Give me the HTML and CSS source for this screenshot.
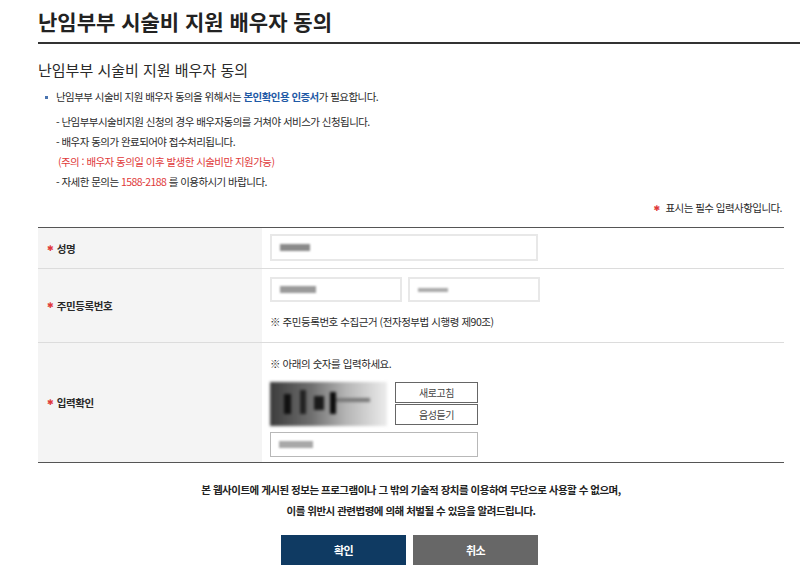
FILE: index.html
```html
<!DOCTYPE html>
<html lang="ko">
<head>
<meta charset="utf-8">
<title>난임부부 시술비 지원 배우자 동의</title>
<link rel="stylesheet" href="styles.css">
</head>
<body>
<div class="page">
  <h1 class="title">난임부부 시술비 지원 배우자 동의</h1>
  <div class="content">
    <h2 class="subtitle">난임부부 시술비 지원 배우자 동의</h2>
    <div class="bullet"><span class="dot"></span><span>난임부부 시술비 지원 배우자 동의을 위해서는 <strong class="blue">본인확인용 인증서</strong>가 필요합니다.</span></div>
    <div class="notes">
      <p>- 난임부부시술비지원 신청의 경우 배우자동의를 거쳐야 서비스가 신청됩니다.</p>
      <p>- 배우자 동의가 완료되어야 접수처리됩니다.</p>
      <p class="red warn">(주의 : 배우자 동의일 이후 발생한 시술비만 지원가능)</p>
      <p>- 자세한 문의는 <span class="red">1588-2188</span> 를 이용하시기 바랍니다.</p>
    </div>
    <p class="req"><span class="star">✱</span> 표시는 필수 입력사항입니다.</p>

    <div class="form">
      <div class="row row-name">
        <div class="label"><span class="star">✱</span>성명</div>
        <div class="value">
          <div class="field field-name"><span class="blur b1"></span></div>
        </div>
      </div>
      <div class="row row-id">
        <div class="label"><span class="star">✱</span>주민등록번호</div>
        <div class="value">
          <div class="id-fields">
            <div class="field field-id"><span class="blur b2"></span></div>
            <div class="field field-id"><span class="blur b3"></span></div>
          </div>
          <p class="hint">※ 주민등록번호 수집근거 (전자정부법 시행령 제90조)</p>
        </div>
      </div>
      <div class="row row-cap">
        <div class="label"><span class="star">✱</span>입력확인</div>
        <div class="value">
          <p class="hint hint-top">※ 아래의 숫자를 입력하세요.</p>
          <div class="captcha-row">
            <div class="captcha"></div>
            <div class="cap-btns">
              <button class="cap-btn">새로고침</button>
              <button class="cap-btn">음성듣기</button>
            </div>
          </div>
          <div class="field field-cap"><span class="blur b4"></span></div>
        </div>
      </div>
    </div>

    <div class="footer-text">
      <p>본 웹사이트에 게시된 정보는 프로그램이나 그 밖의 기술적 장치를 이용하여 무단으로 사용할 수 없으며,</p>
      <p>이를 위반시 관련법령에 의해 처벌될 수 있음을 알려드립니다.</p>
    </div>
    <div class="actions">
      <button class="btn btn-ok">확인</button>
      <button class="btn btn-cancel">취소</button>
    </div>
  </div>
</div>
</body>
</html>
```
FILE: styles.css
```css
* { box-sizing: border-box; }
body {
  margin: 0;
  background: #fff;
  font-family: "Noto Sans CJK KR", "Noto Sans", sans-serif;
  color: #2a2a2a;
}
p { margin: 0; }
.page { padding-left: 38px; }
.title {
  margin: 0;
  padding: 6px 0;
  font-size: 21px;
  line-height: 30px;
  font-weight: 700;
  color: #222;
  border-bottom: 2px solid #333;
}
.content { width: 746px; }
.subtitle {
  margin: 16px 0 0;
  font-size: 15px;
  line-height: 20px;
  font-weight: 400;
  color: #2a2a2a;
}
.bullet {
  margin-top: 8px;
  padding-left: 7px;
  display: flex;
  align-items: center;
  font-size: 10.5px;
  line-height: 18px;
  letter-spacing: -0.55px;
}
.dot {
  width: 3px;
  height: 3px;
  background: #4a74b0;
  margin-right: 8px;
  flex: none;
}
.blue { color: #1f5aa6; font-weight: 700; }
.red { color: #e03a3a; }
.notes {
  margin-top: 6px;
  padding-left: 18px;
  font-size: 10.5px;
  line-height: 20px;
  letter-spacing: -0.55px;
}
.notes .warn { padding-left: 2px; }
.req {
  margin: 7px 0 9px;
  text-align: right;
  padding-right: 2px;
  font-size: 10.5px;
  line-height: 18px;
  letter-spacing: -0.55px;
}
.star {
  color: #e03a3a;
  font-family: "DejaVu Sans", sans-serif;
  font-size: 8px;
  margin-right: 3px;
  letter-spacing: 0;
  vertical-align: 1px;
}
.form {
  border-top: 1px solid #555;
  border-bottom: 1px solid #555;
}
.row {
  display: grid;
  grid-template-columns: 224px 1fr;
  border-bottom: 1px solid #dcdcdc;
}
.row:last-child { border-bottom: none; }
.label {
  background: #f4f4f4;
  display: flex;
  align-items: center;
  padding-left: 9px;
  font-size: 10.5px;
  font-weight: 700;
  letter-spacing: -0.4px;
  color: #2a2a2a;
}
.value { padding: 0 8px; }
.row-name .value { padding-top: 6px; padding-bottom: 7px; }
.row-id .value { padding-top: 8px; padding-bottom: 12px; }
.row-cap .value { padding-top: 13px; padding-bottom: 5px; }
.field {
  background: #fff;
  border: 2px solid #e8e8e8;
  display: flex;
  align-items: center;
  padding-left: 8px;
}
.field-name { width: 268px; height: 27px; }
.id-fields { display: flex; gap: 6px; }
.field-id { width: 132px; height: 25px; }
.blur {
  display: block;
  height: 7px;
  background: #8a8a8a;
  filter: blur(1.3px);
}
.b1 { width: 30px; }
.b2 { width: 36px; background: #9a9a9a; }
.b3 { width: 30px; height: 4px; background: #aaa; }
.b4 { width: 34px; background: #a8a8a8; }
.hint {
  margin-top: 12px;
  font-size: 10.5px;
  line-height: 16px;
  letter-spacing: -0.45px;
}
.hint-top { margin-top: 0; }
.captcha-row {
  margin-top: 10px;
  display: flex;
  gap: 8px;
}
.captcha {
  width: 117px;
  height: 44px;
  background:
    linear-gradient(#111, #111) 14px 12px / 7px 20px no-repeat,
    linear-gradient(#222, #222) 30px 8px / 6px 24px no-repeat,
    linear-gradient(#1a1a1a, #1a1a1a) 44px 14px / 10px 14px no-repeat,
    linear-gradient(#0c0c0c, #0c0c0c) 60px 10px / 6px 22px no-repeat,
    linear-gradient(#777, #777) 66px 16px / 34px 4px no-repeat,
    linear-gradient(to right, #3c3c3c, #6e6e6e 35%, #b5b5b5 65%, #ececec);
  filter: blur(1.6px);
}
.cap-btns {
  display: flex;
  flex-direction: column;
  gap: 1px;
}
.cap-btn {
  width: 83px;
  height: 21px;
  background: #fff;
  border: 1px solid #666;
  font-family: inherit;
  font-size: 10px;
  letter-spacing: -0.5px;
  color: #444;
  padding: 0;
}
.field-cap {
  margin-top: 6px;
  width: 208px;
  height: 25px;
  border: 1px solid #b8b8b8;
}
.footer-text {
  margin-top: 16px;
  text-align: center;
  font-size: 10.5px;
  font-weight: 700;
  line-height: 21px;
  letter-spacing: -0.5px;
  color: #222;
}
.actions {
  margin-top: 14px;
  display: flex;
  justify-content: center;
  gap: 7px;
  padding-right: 3px;
}
.btn {
  width: 125px;
  height: 30px;
  border: none;
  color: #fff;
  font-family: inherit;
  font-size: 11px;
  font-weight: 700;
  letter-spacing: -0.5px;
  padding: 0;
}
.btn-ok { background: #0f3a62; }
.btn-cancel { background: #676767; }
```
